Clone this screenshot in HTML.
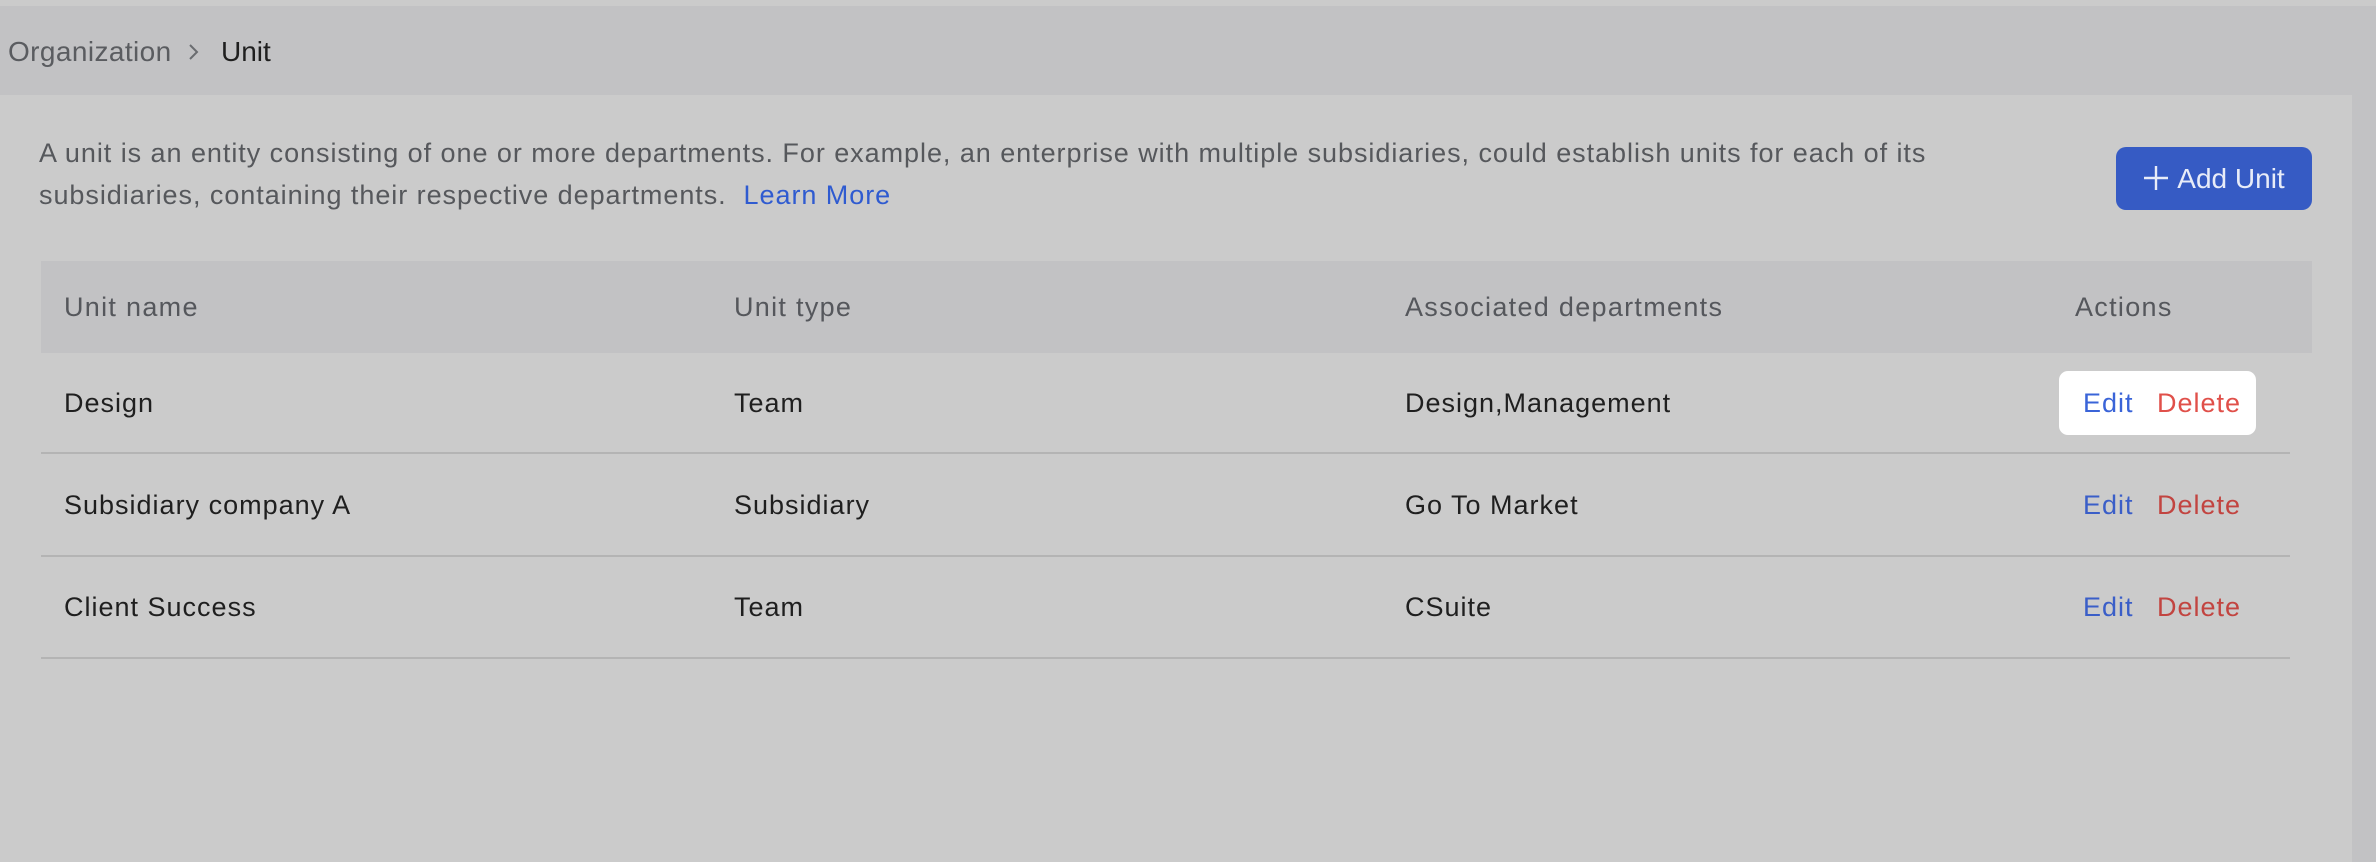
<!DOCTYPE html>
<html><head><meta charset="utf-8"><style>
*{margin:0;padding:0;box-sizing:border-box}
body{width:2376px;height:862px;background:#cbcbcb;font-family:"Liberation Sans",sans-serif;position:relative;overflow:hidden}
.a{position:absolute;white-space:nowrap}
.hdr{position:absolute;left:0;top:6px;width:2376px;height:89px;background:#c2c2c4}
.sb{position:absolute;left:2352px;top:95px;width:24px;height:767px;background:#c2c2c4}
.th{position:absolute;left:41px;top:261px;width:2271px;height:92px;background:#c2c2c4}
.line{position:absolute;left:41px;width:2249px;height:2px;background:#b4b4b4}
.t{font-size:27px;line-height:32px;color:#1f1f1f;letter-spacing:1px}
.h{font-size:27px;line-height:32px;color:#55575c;letter-spacing:1.3px}
.d{font-size:27px;color:#56585c;line-height:42px;letter-spacing:0.95px}
.e{color:#3a5ec8}.x{color:#c24440}
</style></head><body>
<div class="hdr"></div>
<div class="sb"></div>
<div class="a" style="left:8px;top:36px;font-size:28px;line-height:32px;color:#5a5c60;letter-spacing:0.4px">Organization</div>
<svg class="a" style="left:185px;top:42px" width="16" height="20" viewBox="0 0 16 20"><path d="M5 3l7 7-7 7" fill="none" stroke="#6a6c70" stroke-width="2"/></svg>
<div class="a" style="left:221px;top:36px;font-size:28px;line-height:32px;color:#1f1f1f">Unit</div>
<div class="a d" style="left:39px;top:132px">A unit is an entity consisting of one or more departments. For example, an enterprise with multiple subsidiaries, could establish units for each of its</div>
<div class="a d" style="left:39px;top:174px">subsidiaries, containing their respective departments.&nbsp;&nbsp;<span style="color:#2f5bd0">Learn More</span></div>
<div class="a" style="left:2116px;top:147px;width:196px;height:63px;background:#365bc4;border-radius:10px;color:#e8ecf8;font-size:28px;line-height:63px;text-align:center">
<svg style="vertical-align:-3px;margin-right:8px" width="26" height="26" viewBox="0 0 26 26"><path d="M13 1v24M1 13h24" stroke="#e8ecf8" stroke-width="2.4"/></svg>Add Unit</div>
<div class="th"></div>
<div class="a h" style="left:64px;top:291px">Unit name</div>
<div class="a h" style="left:734px;top:291px">Unit type</div>
<div class="a h" style="left:1405px;top:291px">Associated departments</div>
<div class="a h" style="left:2075px;top:291px">Actions</div>
<div class="a" style="left:2059px;top:371px;width:197px;height:64px;background:#fff;border-radius:9px"></div>
<div class="a t" style="left:64px;top:387px">Design</div>
<div class="a t" style="left:734px;top:387px">Team</div>
<div class="a t" style="left:1405px;top:387px">Design,Management</div>
<div class="a t" style="left:2083px;top:387px"><span style="color:#3a64d8">Edit</span></div>
<div class="a t" style="left:2157px;top:387px"><span style="color:#e0504a">Delete</span></div>
<div class="line" style="top:452px"></div>
<div class="a t" style="left:64px;top:489px">Subsidiary company A</div>
<div class="a t" style="left:734px;top:489px">Subsidiary</div>
<div class="a t" style="left:1405px;top:489px">Go To Market</div>
<div class="a t e" style="left:2083px;top:489px">Edit</div>
<div class="a t x" style="left:2157px;top:489px">Delete</div>
<div class="line" style="top:555px"></div>
<div class="a t" style="left:64px;top:591px">Client Success</div>
<div class="a t" style="left:734px;top:591px">Team</div>
<div class="a t" style="left:1405px;top:591px">CSuite</div>
<div class="a t e" style="left:2083px;top:591px">Edit</div>
<div class="a t x" style="left:2157px;top:591px">Delete</div>
<div class="line" style="top:657px"></div>
</body></html>
